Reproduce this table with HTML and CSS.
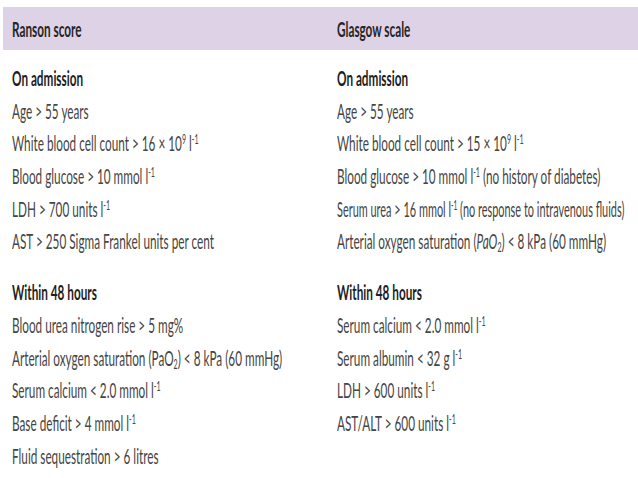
FILE: index.html
```html
<!DOCTYPE html>
<html>
<head>
<meta charset="utf-8">
<link rel="stylesheet" href="styles.css">
</head>
<body>
<div class="table">
  <div class="band">
    <div class="hcell"><span class="sq">Ranson score</span></div>
    <div class="hcell"><span class="sq">Glasgow scale</span></div>
  </div>
  <div class="cols">
    <div class="col">
      <div class="sec">
        <div class="row h"><span class="sq">On admission</span></div>
        <div class="row"><span class="sq">Age &gt; 55 years</span></div>
        <div class="row"><span class="sq">White blood cell count &gt; 16 × 10<sup>9</sup> l<sup>-1</sup></span></div>
        <div class="row"><span class="sq">Blood glucose &gt; 10 mmol l<sup>-1</sup></span></div>
        <div class="row"><span class="sq">LDH &gt; 700 units l<sup>-1</sup></span></div>
        <div class="row"><span class="sq">AST &gt; 250 Sigma Frankel units per cent</span></div>
      </div>
      <div class="sec">
        <div class="row h"><span class="sq">Within 48 hours</span></div>
        <div class="row"><span class="sq">Blood urea nitrogen rise &gt; 5 mg%</span></div>
        <div class="row"><span class="sq">Arterial oxygen saturation (PaO<sub>2</sub>) &lt; 8 kPa (60 mmHg)</span></div>
        <div class="row"><span class="sq">Serum calcium &lt; 2.0 mmol l<sup>-1</sup></span></div>
        <div class="row"><span class="sq">Base deficit &gt; 4 mmol l<sup>-1</sup></span></div>
        <div class="row"><span class="sq">Fluid sequestration &gt; 6 litres</span></div>
      </div>
    </div>
    <div class="col">
      <div class="sec">
        <div class="row h"><span class="sq">On admission</span></div>
        <div class="row"><span class="sq">Age &gt; 55 years</span></div>
        <div class="row"><span class="sq">White blood cell count &gt; 15 × 10<sup>9</sup> l<sup>-1</sup></span></div>
        <div class="row"><span class="sq">Blood glucose &gt; 10 mmol l<sup>-1</sup> (no history of diabetes)</span></div>
        <div class="row"><span class="sq tight">Serum urea &gt; 16 mmol l<sup>-1</sup> (no response to intravenous fluids)</span></div>
        <div class="row"><span class="sq">Arterial oxygen saturation (<i>PaO</i><sub>2</sub>) &lt; 8 kPa (60 mmHg)</span></div>
      </div>
      <div class="sec">
        <div class="row h"><span class="sq">Within 48 hours</span></div>
        <div class="row"><span class="sq">Serum calcium &lt; 2.0 mmol l<sup>-1</sup></span></div>
        <div class="row"><span class="sq">Serum albumin &lt; 32 g l<sup>-1</sup></span></div>
        <div class="row"><span class="sq">LDH &gt; 600 units l<sup>-1</sup></span></div>
        <div class="row"><span class="sq">AST/ALT &gt; 600 units l<sup>-1</sup></span></div>
      </div>
    </div>
  </div>
</div>
</body>
</html>
```
FILE: styles.css
```css
html, body {
  margin: 0;
  padding: 0;
  background: #ffffff;
}
body {
  width: 638px;
  height: 478px;
  overflow: hidden;
  font-family: Lato, "Liberation Sans", sans-serif;
  font-size: 21px;
  color: #454545;
}
.table {
  margin: 7px 0 0 3px;
}
.band {
  display: grid;
  grid-template-columns: 325px 1fr;
  height: 43px;
  align-items: center;
  background: #ded2e6;
  color: #262626;
  font-weight: bold;
}
.hcell {
  padding-left: 9px;
  white-space: nowrap;
  overflow: hidden;
}
.cols {
  display: grid;
  grid-template-columns: 325px minmax(0, 1fr);
  padding-top: 12px;
}
.col {
  padding-left: 9px;
  min-width: 0;
  overflow: hidden;
}
.sec + .sec {
  margin-top: 18px;
}
.row {
  height: 32.7px;
  line-height: 32.7px;
  white-space: nowrap;
}
.row.h {
  font-weight: bold;
  color: #1e1e1e;
}
.sq {
  display: inline-block;
  transform: scaleX(0.56);
  transform-origin: 0 50%;
}
.sq.tight {
  transform: scaleX(0.52);
}
sup {
  font-size: 0.6em;
  vertical-align: 0.55em;
  line-height: 0;
}
sub {
  font-size: 0.6em;
  vertical-align: -0.2em;
  line-height: 0;
}
```
